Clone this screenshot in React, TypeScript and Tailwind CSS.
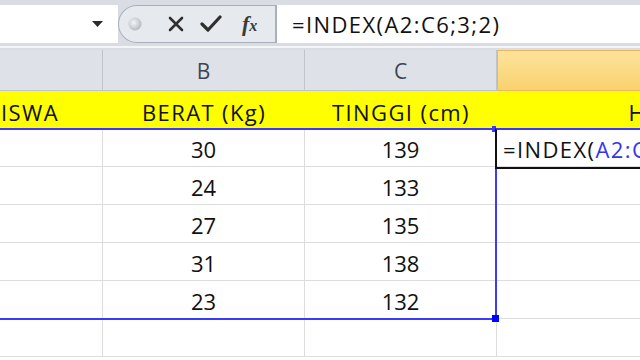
const font = { fontFamily: '"Open Sans", "Liberation Sans", sans-serif' };

const rows = [
  ["", "30", "139"],
  ["", "24", "133"],
  ["", "27", "135"],
  ["", "31", "138"],
  ["", "23", "132"],
  ["", "", ""],
];

const FormulaBar = () => {
  return (
    <div className="flex h-[50px] flex-col bg-[#d9dde3]">
      <div className="mt-[5px] flex h-[38px]">
        {/* Name box */}
        <div className="relative flex w-[118px] items-center justify-end bg-white pr-[15px]">
          <svg width="11" height="6" viewBox="0 0 11 6">
            <path d="M0 0 L11 0 L5.5 6 Z" fill="#2b2b2b" />
          </svg>
        </div>

        {/* Buttons */}
        <div className="flex w-[159px] items-center rounded-l-[19px] border border-r-2 border-[#a9b0ba] bg-[#e6e9ed] pl-[8px]">
          <svg width="14" height="14" viewBox="0 0 14 14" className="ml-[1px]">
            <defs>
              <radialGradient id="dot" cx="0.4" cy="0.4" r="0.6">
                <stop offset="0" stopColor="#f4f5f7" />
                <stop offset="1" stopColor="#b8bcc3" />
              </radialGradient>
            </defs>
            <circle cx="7" cy="7" r="6.5" fill="url(#dot)" />
          </svg>
          <svg width="18" height="18" viewBox="0 0 18 18" className="ml-[25px]">
            <path d="M3 3 L15 15 M15 3 L3 15" stroke="#2f2f2f" strokeWidth="2.6" strokeLinecap="round" />
          </svg>
          <svg width="22" height="18" viewBox="0 0 22 18" className="ml-[15px]">
            <path d="M2 9 L8 15 L20 2" stroke="#2f2f2f" strokeWidth="3.2" fill="none" strokeLinecap="round" strokeLinejoin="round" />
          </svg>
          <span
            className="ml-[20px] text-[22px] font-bold italic leading-none text-[#3a3a3a]"
            style={{ fontFamily: '"Liberation Serif", serif' }}
          >
            f<span className="text-[16px]">x</span>
          </span>
        </div>

        {/* Formula input */}
        <div
          className="flex flex-1 items-center bg-white pl-[15px] text-[22px] tracking-[1.4px] text-[#111]"
          style={font}
        >
          =INDEX(A2:C6;3;2)
        </div>
      </div>
      <div className="mt-[3px] h-[2px] bg-[#f3f5f7]" />
    </div>
  );
};

const HeaderRow = () => {
  return (
    <div className="flex h-[41px] pt-[3px] text-[21px] text-[#3d4555]" style={font}>
      <div className="-mt-[3px] w-[103px] shrink-0 border-r border-b border-[#bfc4cc] bg-[#dee2e8]" />
      <div className="-mt-[3px] flex w-[202px] shrink-0 items-center justify-center border-r border-b border-[#bfc4cc] bg-[#dee2e8] pt-[3px]">
        B
      </div>
      <div className="-mt-[3px] flex w-[192px] shrink-0 items-center justify-center border-r border-b border-[#bfc4cc] bg-[#dee2e8] pt-[3px]">
        C
      </div>
      <div className="-mt-[3px] w-[330px] shrink-0 border-t border-b border-l border-[#f0b85a] bg-gradient-to-b from-[#fde39a] to-[#f9d26e]" />
    </div>
  );
};

const TitleRow = () => {
  return (
    <div
      className="flex h-[38px] bg-[#ffff00] pt-[4px] text-[22px] tracking-[1.4px] text-[#111]"
      style={font}
    >
      <div className="flex w-[103px] shrink-0 items-center justify-end overflow-hidden whitespace-nowrap pr-[44px]">
        NAMA SISWA
      </div>
      <div className="flex w-[202px] shrink-0 items-center justify-center">BERAT (Kg)</div>
      <div className="flex w-[192px] shrink-0 items-center justify-center">TINGGI (cm)</div>
      <div className="flex w-[330px] shrink-0 items-center justify-center">HASIL</div>
    </div>
  );
};

const DataRow = ({ cells, first }: { cells: string[]; first?: boolean }) => {
  return (
    <div className="flex h-[38px] text-[22px] text-[#111]" style={font}>
      <div className="w-[103px] shrink-0 border-r border-b border-[#dadcdd]" />
      <div className="flex w-[202px] shrink-0 items-center justify-center border-r border-b border-[#dadcdd] pt-[4px]">
        {cells[1]}
      </div>
      <div className="flex w-[192px] shrink-0 items-center justify-center border-r border-b border-[#dadcdd] pt-[4px]">
        {cells[2]}
      </div>
      <div className="flex w-[330px] shrink-0 items-center whitespace-nowrap border-b border-[#dadcdd] pt-[4px] pl-[6px] tracking-[1.4px]">
        {first && (
          <>
            =INDEX(<span className="text-[#3535f0]">A2:C6</span>;3;2)
          </>
        )}
      </div>
    </div>
  );
};

export default function App() {
  return (
    <div className="relative h-[360px] w-[640px] overflow-hidden bg-white">
      <FormulaBar />
      <HeaderRow />
      <TitleRow />
      <div className="relative">
        {rows.map((r, i) => (
          <DataRow key={i} cells={r} first={i === 0} />
        ))}

        {/* Referenced range A2:C6 */}
        <div className="pointer-events-none absolute top-[-1px] left-[-4px] h-[192px] w-[501px] border-2 border-[#3a3aff]" />
        <div className="absolute top-[-3px] left-[492px] h-[6px] w-[4px] bg-[#3a3aff]" />
        <div className="absolute top-[186px] left-[492px] h-[7px] w-[7px] bg-[#0000ff]" />

        {/* Active cell D2 */}
        <div className="pointer-events-none absolute top-[-1px] left-[495px] h-[41px] w-[200px] border-2 border-[#111] border-t-[#3a3aff]" />
      </div>
    </div>
  );
}
